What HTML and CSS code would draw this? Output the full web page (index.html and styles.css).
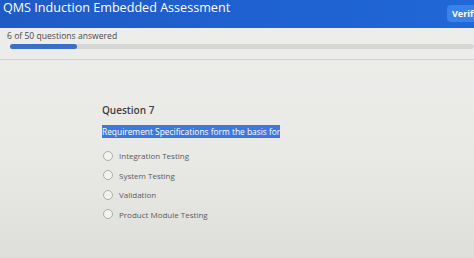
FILE: index.html
```html
<!DOCTYPE html>
<html>
<head>
<meta charset="utf-8">
<link rel="stylesheet" href="styles.css">
</head>
<body>
<div class="page">
  <header class="topbar">
    <h1 class="title">QMS Induction Embedded Assessment</h1>
    <button class="verify">Verify</button>
  </header>
  <section class="progress">
    <div class="progress-label">6 of 50 questions answered</div>
    <div class="track"><div class="fill" style="width:14.5%"></div></div>
  </section>
  <div class="divider"></div>
  <main class="question">
    <h2 class="qtitle">Question 7</h2>
    <p class="qtext"><span class="selected">Requirement Specifications form the basis for</span></p>
    <ul class="options">
      <li class="option"><span class="radio"></span>Integration Testing</li>
      <li class="option"><span class="radio"></span>System Testing</li>
      <li class="option"><span class="radio"></span>Validation</li>
      <li class="option"><span class="radio"></span>Product Module Testing</li>
    </ul>
  </main>
</div>
</body>
</html>
```
FILE: styles.css
```css
* { box-sizing: border-box; }
html, body { margin: 0; padding: 0; }
body {
  width: 474px;
  height: 258px;
  overflow: hidden;
  font-family: "Open Sans", "Noto Sans", sans-serif;
  background: linear-gradient(180deg, #ededeb 0%, #e9e9e6 60%, #dededb 100%);
}
.page {
  display: flex;
  flex-direction: column;
  height: 258px;
}
.topbar {
  height: 28px;
  flex: none;
  background: linear-gradient(90deg, #1f5bc4 0%, #1f62d2 60%, #2167d6 100%);
  display: flex;
  align-items: flex-start;
  justify-content: space-between;
}
.title {
  margin: -1px 0 0 3px;
  color: #ffffff;
  font-size: 12.6px;
  font-weight: 400;
  line-height: 17px;
}
.verify {
  margin: 5px 0 0 0;
  height: 17px;
  width: 27px;
  padding: 0 0 0 5px;
  border: none;
  border-radius: 4px 0 0 4px;
  background: #3a82ea;
  color: #ffffff;
  font-family: "Open Sans", sans-serif;
  font-size: 9px;
  font-weight: 700;
  line-height: 17px;
  text-align: left;
  overflow: hidden;
  white-space: nowrap;
}
.progress {
  padding: 3px 0 0 7px;
}
.progress-label {
  font-size: 8.6px;
  line-height: 11px;
  color: #4a4a4a;
}
.track {
  margin: 2px 0 0 3px;
  height: 5px;
  background: #d6d6d4;
  border-radius: 3px;
}
.fill {
  height: 5px;
  background: #3b6ec6;
  border-radius: 3px;
}
.divider {
  margin-top: 10px;
  height: 1px;
  background: #cfcfcd;
}
.question {
  padding: 43px 0 0 102px;
}
.qtitle {
  margin: 0;
  font-size: 10px;
  font-weight: 600;
  line-height: 14px;
  color: #3e3e3e;
}
.qtext {
  margin: 9px 0 0 0;
  font-size: 8.4px;
  line-height: 12px;
}
.selected {
  background: #3f78dc;
  color: #ffffff;
  padding: 1px 0;
}
.options {
  list-style: none;
  margin: 12px 0 0 0;
  padding: 0;
  display: flex;
  flex-direction: column;
  gap: 8.5px;
}
.option {
  display: flex;
  align-items: center;
  gap: 6px;
  font-size: 8px;
  line-height: 11px;
  color: #5c5c5c;
}
.radio {
  width: 10px;
  height: 10px;
  border: 1px solid #adadab;
  border-radius: 50%;
  background: #f2f2f0;
  margin-left: 1px;
}
```
